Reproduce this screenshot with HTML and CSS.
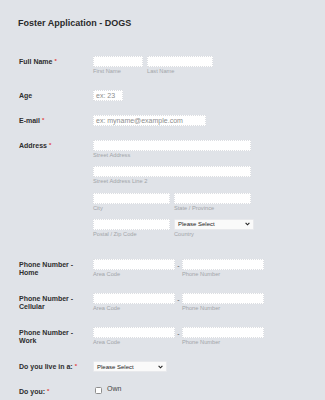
FILE: index.html
```html
<!DOCTYPE html>
<html>
<head>
<meta charset="utf-8">
<link rel="stylesheet" href="styles.css">
</head>
<body>
<div class="page">
  <h1 class="title">Foster Application - DOGS</h1>

  <div class="row">
    <div class="label">Full Name <span class="req">*</span></div>
    <div class="field">
      <div class="line">
        <div class="cell"><div class="input w50"></div><div class="sub">First Name</div></div>
        <div class="cell"><div class="input w66"></div><div class="sub">Last Name</div></div>
      </div>
    </div>
  </div>

  <div class="row">
    <div class="label">Age</div>
    <div class="field"><div class="input w30"><span class="ph">ex: 23</span></div></div>
  </div>

  <div class="row">
    <div class="label">E-mail <span class="req">*</span></div>
    <div class="field"><div class="input w113"><span class="ph">ex: myname@example.com</span></div></div>
  </div>

  <div class="row">
    <div class="label">Address <span class="req">*</span></div>
    <div class="field">
      <div class="subrow"><div class="input w158"></div><div class="sub">Street Address</div></div>
      <div class="subrow"><div class="input w158"></div><div class="sub">Street Address Line 2</div></div>
      <div class="subrow line">
        <div class="cell"><div class="input w77"></div><div class="sub">City</div></div>
        <div class="cell"><div class="input w77"></div><div class="sub">State / Province</div></div>
      </div>
      <div class="subrow line">
        <div class="cell"><div class="input w77"></div><div class="sub">Postal / Zip Code</div></div>
        <div class="cell">
          <div class="select w80"><span>Please Select</span><svg class="chev" width="5" height="4" viewBox="0 0 5 4"><path d="M0.6 0.8 L2.5 2.8 L4.4 0.8" fill="none" stroke="#222" stroke-width="1.1"/></svg></div>
          <div class="sub">Country</div>
        </div>
      </div>
    </div>
  </div>

  <div class="row">
    <div class="label">Phone Number - Home</div>
    <div class="field">
      <div class="line phone">
        <div class="cell"><div class="input w82"></div><div class="sub">Area Code</div></div>
        <div class="dash">-</div>
        <div class="cell"><div class="input w82"></div><div class="sub">Phone Number</div></div>
      </div>
    </div>
  </div>

  <div class="row">
    <div class="label">Phone Number - Cellular</div>
    <div class="field">
      <div class="line phone">
        <div class="cell"><div class="input w82"></div><div class="sub">Area Code</div></div>
        <div class="dash">-</div>
        <div class="cell"><div class="input w82"></div><div class="sub">Phone Number</div></div>
      </div>
    </div>
  </div>

  <div class="row">
    <div class="label">Phone Number - Work</div>
    <div class="field">
      <div class="line phone">
        <div class="cell"><div class="input w82"></div><div class="sub">Area Code</div></div>
        <div class="dash">-</div>
        <div class="cell"><div class="input w82"></div><div class="sub">Phone Number</div></div>
      </div>
    </div>
  </div>

  <div class="row">
    <div class="label">Do you live in a: <span class="req">*</span></div>
    <div class="field">
      <div class="select w74"><span>Please Select</span><svg class="chev" width="5" height="4" viewBox="0 0 5 4"><path d="M0.6 0.8 L2.5 2.8 L4.4 0.8" fill="none" stroke="#222" stroke-width="1.1"/></svg></div>
    </div>
  </div>

  <div class="row">
    <div class="label">Do you: <span class="req">*</span></div>
    <div class="field">
      <div class="check"><span class="box"></span><span class="opt">Own</span></div>
    </div>
  </div>
</div>
</body>
</html>
```

FILE: styles.css
```css
html, body {
  margin: 0;
  padding: 0;
  background: #e0e3e8;
  font-family: "Liberation Sans", Arial, sans-serif;
}
.page {
  padding: 18px 0 0 18px;
  height: 382px;
  overflow: hidden;
}
.title {
  margin: 0 0 27px 0;
  font-size: 9px;
  line-height: 11px;
  font-weight: bold;
  color: #2a2a2a;
}
.row {
  display: flex;
  padding-left: 1px;
  margin-bottom: 14px;
}
.label {
  width: 58px;
  margin-right: 16px;
  font-size: 7px;
  line-height: 8px;
  font-weight: bold;
  color: #2e2e2e;
  padding-top: 1.5px;
}
.req {
  color: #e0403a;
  font-size: 6px;
  position: relative;
  top: -1px;
}
.field {
  display: flex;
  flex-direction: column;
}
.line {
  display: flex;
  gap: 4px;
}
.subrow {
  margin-bottom: 6.25px;
}
.cell {
  display: flex;
  flex-direction: column;
}
.input {
  box-sizing: border-box;
  height: 11px;
  background: #ffffff;
  border: 1px dotted #dcdee2;
  display: flex;
  align-items: center;
  padding-left: 2px;
}
.ph {
  font-size: 7px;
  color: #8c8c8c;
  line-height: 9px;
}
.sub {
  font-size: 5.7px;
  line-height: 9px;
  color: #a2a5a9;
  white-space: nowrap;
}
.w30 { width: 30px; }
.w50 { width: 50px; }
.w66 { width: 66px; }
.w74 { width: 74px; }
.w77 { width: 77px; }
.w80 { width: 80px; }
.w82 { width: 82px; }
.w113 { width: 113px; }
.w158 { width: 158px; }
.phone {
  gap: 0;
}
.dash {
  width: 7px;
  text-align: center;
  font-size: 7px;
  line-height: 11px;
  color: #555;
  padding-top: 1px;
}
.select {
  box-sizing: border-box;
  height: 11px;
  background: #fafafa;
  border: 1px solid #e8e9ec;
  border-radius: 1px;
  display: flex;
  align-items: center;
  justify-content: space-between;
  padding: 0 3px 0 3px;
  font-size: 6px;
  color: #222;
}
.chev {
  display: block;
}
.check {
  display: flex;
  align-items: flex-start;
  padding-left: 2px;
}
.box {
  box-sizing: border-box;
  width: 7px;
  height: 7px;
  margin-top: 1px;
  border: 1px solid #8e8e8e;
  border-radius: 1.5px;
  background: #fff;
}
.opt {
  margin-left: 5px;
  font-size: 7px;
  line-height: 7px;
  color: #444;
  margin-top: -1px;
}
```
